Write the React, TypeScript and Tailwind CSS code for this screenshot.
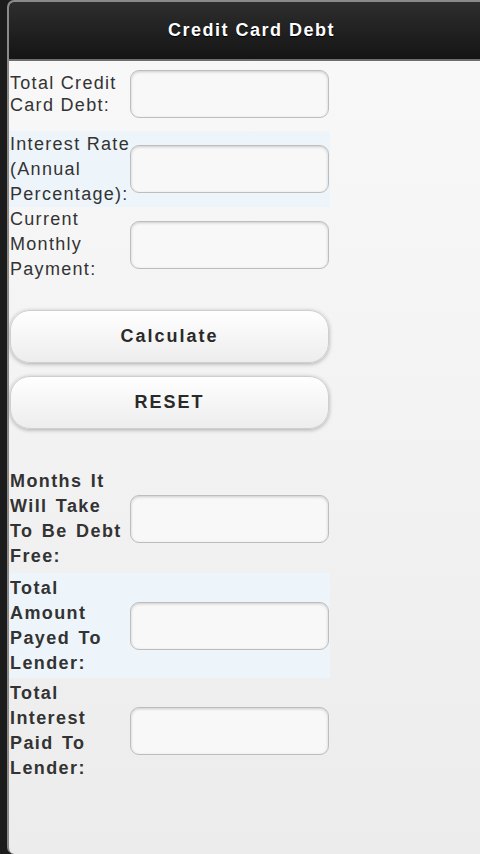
import React from "react";

const font = { fontFamily: '"Liberation Sans", Arial, sans-serif' };

function Field() {
  return (
    <div className="w-[199px] h-[48px] rounded-[9px] border border-[#bdbdbd] bg-[#f8f8f8] shadow-[inset_0_1px_3px_rgba(0,0,0,0.18)]" />
  );
}

function Row({
  lines,
  bold,
  alt,
  h,
  extra,
  leading,
}: {
  lines: string[];
  bold?: boolean;
  alt?: boolean;
  h: string;
  extra?: string;
  leading?: string;
}) {
  return (
    <div
      className={`flex items-center w-[321px] pl-[1px] ${h} ${alt ? "bg-[#edf5fa]" : ""} ${extra ?? ""}`}
    >
      <div
        className={`w-[120px] text-[18px] text-[#333] ${leading ?? "leading-[25px]"} ${bold ? "font-bold tracking-[1.4px] [word-spacing:2px]" : "font-normal tracking-[1.3px]"}`}
      >
        {lines.map((l, i) => (
          <div key={i} className="whitespace-nowrap">
            {l}
          </div>
        ))}
      </div>
      <Field />
    </div>
  );
}

function Btn({ label }: { label: string }) {
  return (
    <div className="ml-[1px] w-[319px] h-[53px] rounded-[20px] border border-[#cfcfcf] bg-gradient-to-b from-[#ffffff] to-[#ededed] shadow-[0_1px_4px_rgba(0,0,0,0.3)] flex items-center justify-center text-[18px] font-bold tracking-[2px] text-[#2a2a2a]">
      {label}
    </div>
  );
}

export default function App() {
  return (
    <div className="flex w-[480px] h-[854px] bg-[#1c1c1c] overflow-hidden" style={font}>
      <div className="w-[7px] shrink-0" />
      <div className="flex-1 flex flex-col border-l-2 border-t-2 border-[#8a8a8a] rounded-tl-[7px] rounded-bl-[7px] overflow-hidden bg-gradient-to-b from-[#f9f9f9] to-[#ececec]">
        <div className="h-[59px] shrink-0 border-b-2 border-[#6e6e6e] bg-gradient-to-b from-[#2e2e2e] to-[#151515] flex items-center justify-center pl-[14px]">
          <span className="text-white text-[18px] font-bold tracking-[1.5px] [text-shadow:0_1px_1px_#000]">
            Credit Card Debt
          </span>
        </div>
        <div className="flex flex-col">
          <Row lines={["Total Credit", "Card Debt:"]} h="h-[70px]" extra="pb-[4px]" leading="leading-[22px]" />
          <Row lines={["Interest Rate", "(Annual", "Percentage):"]} h="h-[76px]" alt />
          <Row lines={["Current", "Monthly", "Payment:"]} h="h-[75px]" />
          <div className="mt-[28px] flex flex-col gap-[13px]">
            <Btn label="Calculate" />
            <Btn label="RESET" />
          </div>
          <div className="mt-[36px]">
            <Row lines={["Months It", "Will Take", "To Be Debt", "Free:"]} bold h="h-[108px]" />
            <Row lines={["Total", "Amount", "Payed To", "Lender:"]} bold alt h="h-[105px]" />
            <Row lines={["Total", "Interest", "Paid To", "Lender:"]} bold h="h-[106px]" />
          </div>
        </div>
      </div>
    </div>
  );
}
